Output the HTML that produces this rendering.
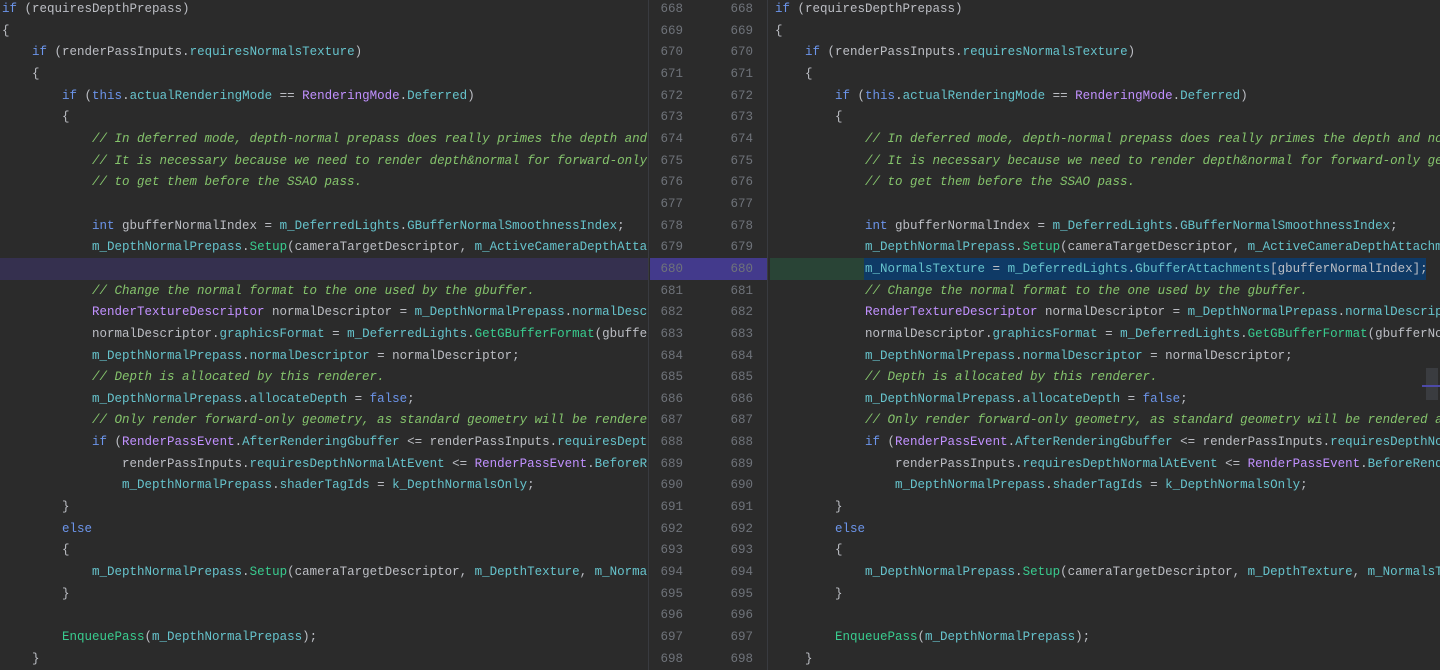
<!DOCTYPE html>
<html><head><meta charset="utf-8"><style>
body{margin:0;width:1440px;height:670px;background:#2b2b2b;overflow:hidden;position:relative;font-family:"Liberation Mono",monospace;font-size:12.5px;color:#bcbec4}
.pane{position:absolute;top:-1px;height:671px;overflow:hidden}
.pane div{height:21.67px;line-height:21.67px;white-space:pre}
.k{color:#6c95eb}.f{color:#66c3cc}.t{color:#c191ff}.m{color:#39cc8f}.c{color:#85c46c;font-style:italic}
.g{position:absolute;left:648px;width:120px;top:0;height:670px;border-left:1px solid #393b40;border-right:1px solid #393b40;box-sizing:border-box}
.num{color:#6f737a;text-align:right;width:36px}
</style></head><body>
<div style="position:absolute;left:0;top:258px;width:648px;height:22px;background:#35304f"></div>
<div style="position:absolute;left:770px;top:258px;width:94px;height:22px;background:#294436"></div>
<div style="position:absolute;left:864px;top:258px;width:562px;height:22px;background:#0f3a66"></div>
<div style="position:absolute;left:1426px;top:368px;width:12px;height:32px;background:#3a3c40"></div>
<div style="position:absolute;left:1422px;top:385px;width:18px;height:2px;background:#4d4aa8"></div>
<div class="g"><div style="position:absolute;left:1px;top:258px;width:117px;height:22px;background:#433a8c"></div></div>

<div class="pane num" style="left:647px">
<div>668</div><div>669</div><div>670</div><div>671</div><div>672</div><div>673</div><div>674</div><div>675</div><div>676</div><div>677</div><div>678</div><div>679</div><div>680</div><div>681</div><div>682</div><div>683</div><div>684</div><div>685</div><div>686</div><div>687</div><div>688</div><div>689</div><div>690</div><div>691</div><div>692</div><div>693</div><div>694</div><div>695</div><div>696</div><div>697</div><div>698</div>
</div>
<div class="pane num" style="left:717px">
<div>668</div><div>669</div><div>670</div><div>671</div><div>672</div><div>673</div><div>674</div><div>675</div><div>676</div><div>677</div><div>678</div><div>679</div><div>680</div><div>681</div><div>682</div><div>683</div><div>684</div><div>685</div><div>686</div><div>687</div><div>688</div><div>689</div><div>690</div><div>691</div><div>692</div><div>693</div><div>694</div><div>695</div><div>696</div><div>697</div><div>698</div>
</div>

<div class="pane" style="left:2px;width:645px">
<div><span class="k">if</span> (requiresDepthPrepass)</div>
<div>{</div>
<div>    <span class="k">if</span> (renderPassInputs.<span class="f">requiresNormalsTexture</span>)</div>
<div>    {</div>
<div>        <span class="k">if</span> (<span class="k">this</span>.<span class="f">actualRenderingMode</span> == <span class="t">RenderingMode</span>.<span class="f">Deferred</span>)</div>
<div>        {</div>
<div>            <span class="c">// In deferred mode, depth-normal prepass does really primes the depth and normal buffers,</span></div>
<div>            <span class="c">// It is necessary because we need to render depth&amp;normal for forward-only geometry and it is the only way</span></div>
<div>            <span class="c">// to get them before the SSAO pass.</span></div>
<div></div>
<div>            <span class="k">int</span> gbufferNormalIndex = <span class="f">m_DeferredLights</span>.<span class="f">GBufferNormalSmoothnessIndex</span>;</div>
<div>            <span class="f">m_DepthNormalPrepass</span>.<span class="m">Setup</span>(cameraTargetDescriptor, <span class="f">m_ActiveCameraDepthAttachment</span>, <span class="f">m_NormalsTexture</span>);</div>
<div></div>
<div>            <span class="c">// Change the normal format to the one used by the gbuffer.</span></div>
<div>            <span class="t">RenderTextureDescriptor</span> normalDescriptor = <span class="f">m_DepthNormalPrepass</span>.<span class="f">normalDescriptor</span>;</div>
<div>            normalDescriptor.<span class="f">graphicsFormat</span> = <span class="f">m_DeferredLights</span>.<span class="m">GetGBufferFormat</span>(gbufferNormalIndex);</div>
<div>            <span class="f">m_DepthNormalPrepass</span>.<span class="f">normalDescriptor</span> = normalDescriptor;</div>
<div>            <span class="c">// Depth is allocated by this renderer.</span></div>
<div>            <span class="f">m_DepthNormalPrepass</span>.<span class="f">allocateDepth</span> = <span class="k">false</span>;</div>
<div>            <span class="c">// Only render forward-only geometry, as standard geometry will be rendered as normal into the gbuffer.</span></div>
<div>            <span class="k">if</span> (<span class="t">RenderPassEvent</span>.<span class="f">AfterRenderingGbuffer</span> &lt;= renderPassInputs.<span class="f">requiresDepthNormalAtEvent</span> &amp;&amp;</div>
<div>                renderPassInputs.<span class="f">requiresDepthNormalAtEvent</span> &lt;= <span class="t">RenderPassEvent</span>.<span class="f">BeforeRenderingOpaques</span>)</div>
<div>                <span class="f">m_DepthNormalPrepass</span>.<span class="f">shaderTagIds</span> = <span class="f">k_DepthNormalsOnly</span>;</div>
<div>        }</div>
<div>        <span class="k">else</span></div>
<div>        {</div>
<div>            <span class="f">m_DepthNormalPrepass</span>.<span class="m">Setup</span>(cameraTargetDescriptor, <span class="f">m_DepthTexture</span>, <span class="f">m_NormalsTexture</span>);</div>
<div>        }</div>
<div></div>
<div>        <span class="m">EnqueuePass</span>(<span class="f">m_DepthNormalPrepass</span>);</div>
<div>    }</div>
</div>

<div class="pane" style="left:775px;width:665px">
<div><span class="k">if</span> (requiresDepthPrepass)</div>
<div>{</div>
<div>    <span class="k">if</span> (renderPassInputs.<span class="f">requiresNormalsTexture</span>)</div>
<div>    {</div>
<div>        <span class="k">if</span> (<span class="k">this</span>.<span class="f">actualRenderingMode</span> == <span class="t">RenderingMode</span>.<span class="f">Deferred</span>)</div>
<div>        {</div>
<div>            <span class="c">// In deferred mode, depth-normal prepass does really primes the depth and normal buffers,</span></div>
<div>            <span class="c">// It is necessary because we need to render depth&amp;normal for forward-only geometry and it is the only way</span></div>
<div>            <span class="c">// to get them before the SSAO pass.</span></div>
<div></div>
<div>            <span class="k">int</span> gbufferNormalIndex = <span class="f">m_DeferredLights</span>.<span class="f">GBufferNormalSmoothnessIndex</span>;</div>
<div>            <span class="f">m_DepthNormalPrepass</span>.<span class="m">Setup</span>(cameraTargetDescriptor, <span class="f">m_ActiveCameraDepthAttachment</span>, <span class="f">m_NormalsTexture</span>);</div>
<div>            <span class="f">m_NormalsTexture</span> = <span class="f">m_DeferredLights</span>.<span class="f">GbufferAttachments</span>[gbufferNormalIndex];</div>
<div>            <span class="c">// Change the normal format to the one used by the gbuffer.</span></div>
<div>            <span class="t">RenderTextureDescriptor</span> normalDescriptor = <span class="f">m_DepthNormalPrepass</span>.<span class="f">normalDescriptor</span>;</div>
<div>            normalDescriptor.<span class="f">graphicsFormat</span> = <span class="f">m_DeferredLights</span>.<span class="m">GetGBufferFormat</span>(gbufferNormalIndex);</div>
<div>            <span class="f">m_DepthNormalPrepass</span>.<span class="f">normalDescriptor</span> = normalDescriptor;</div>
<div>            <span class="c">// Depth is allocated by this renderer.</span></div>
<div>            <span class="f">m_DepthNormalPrepass</span>.<span class="f">allocateDepth</span> = <span class="k">false</span>;</div>
<div>            <span class="c">// Only render forward-only geometry, as standard geometry will be rendered as normal into the gbuffer.</span></div>
<div>            <span class="k">if</span> (<span class="t">RenderPassEvent</span>.<span class="f">AfterRenderingGbuffer</span> &lt;= renderPassInputs.<span class="f">requiresDepthNormalAtEvent</span> &amp;&amp;</div>
<div>                renderPassInputs.<span class="f">requiresDepthNormalAtEvent</span> &lt;= <span class="t">RenderPassEvent</span>.<span class="f">BeforeRenderingOpaques</span>)</div>
<div>                <span class="f">m_DepthNormalPrepass</span>.<span class="f">shaderTagIds</span> = <span class="f">k_DepthNormalsOnly</span>;</div>
<div>        }</div>
<div>        <span class="k">else</span></div>
<div>        {</div>
<div>            <span class="f">m_DepthNormalPrepass</span>.<span class="m">Setup</span>(cameraTargetDescriptor, <span class="f">m_DepthTexture</span>, <span class="f">m_NormalsTexture</span>);</div>
<div>        }</div>
<div></div>
<div>        <span class="m">EnqueuePass</span>(<span class="f">m_DepthNormalPrepass</span>);</div>
<div>    }</div>
</div>
</body></html>
